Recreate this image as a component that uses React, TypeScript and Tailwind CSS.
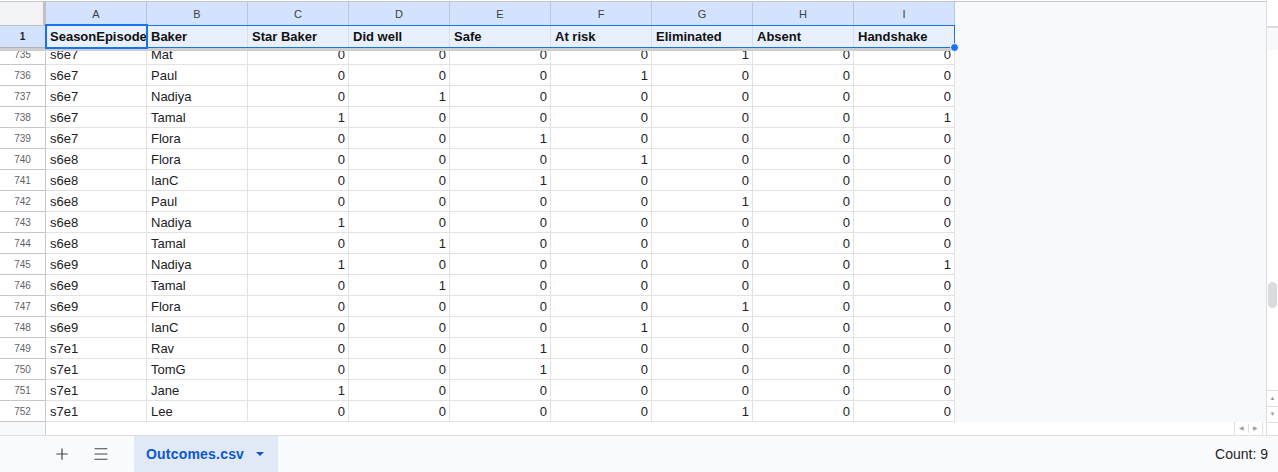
import React from "react";
import { Plus, Menu } from "lucide-react";

const letters = ["A", "B", "C", "D", "E", "F", "G", "H", "I"];
const headers = ["SeasonEpisode", "Baker", "Star Baker", "Did well", "Safe", "At risk", "Eliminated", "Absent", "Handshake"];

const rows: [number, string, string, number[]][] = [
  [735, "s6e7", "Mat", [0, 0, 0, 0, 1, 0, 0]],
  [736, "s6e7", "Paul", [0, 0, 0, 1, 0, 0, 0]],
  [737, "s6e7", "Nadiya", [0, 1, 0, 0, 0, 0, 0]],
  [738, "s6e7", "Tamal", [1, 0, 0, 0, 0, 0, 1]],
  [739, "s6e7", "Flora", [0, 0, 1, 0, 0, 0, 0]],
  [740, "s6e8", "Flora", [0, 0, 0, 1, 0, 0, 0]],
  [741, "s6e8", "IanC", [0, 0, 1, 0, 0, 0, 0]],
  [742, "s6e8", "Paul", [0, 0, 0, 0, 1, 0, 0]],
  [743, "s6e8", "Nadiya", [1, 0, 0, 0, 0, 0, 0]],
  [744, "s6e8", "Tamal", [0, 1, 0, 0, 0, 0, 0]],
  [745, "s6e9", "Nadiya", [1, 0, 0, 0, 0, 0, 1]],
  [746, "s6e9", "Tamal", [0, 1, 0, 0, 0, 0, 0]],
  [747, "s6e9", "Flora", [0, 0, 0, 0, 1, 0, 0]],
  [748, "s6e9", "IanC", [0, 0, 0, 1, 0, 0, 0]],
  [749, "s7e1", "Rav", [0, 0, 1, 0, 0, 0, 0]],
  [750, "s7e1", "TomG", [0, 0, 1, 0, 0, 0, 0]],
  [751, "s7e1", "Jane", [1, 0, 0, 0, 0, 0, 0]],
  [752, "s7e1", "Lee", [0, 0, 0, 0, 1, 0, 0]],
];

const DataRow = ({ row }: { row: [number, string, string, number[]] }) => {
  const [num, ep, baker, vals] = row;
  return (
    <div className="flex h-[21px] w-[955px] bg-white">
      <div className="flex w-[46px] shrink-0 items-center justify-center border-r border-b border-[#c7c7c7] pt-px text-[10px] text-[#5f6368]">
        {num}
      </div>
      <div className="flex w-[101px] shrink-0 items-center border-r border-b border-[#e2e2e2] pl-[4px] pt-px text-[13px] text-[#202124]">
        {ep}
      </div>
      <div className="flex w-[101px] shrink-0 items-center border-r border-b border-[#e2e2e2] pl-[4px] pt-px text-[13px] text-[#202124]">
        {baker}
      </div>
      {vals.map((v, i) => (
        <div
          key={i}
          className="flex w-[101px] shrink-0 items-center justify-end border-r border-b border-[#e2e2e2] pr-[3px] pt-px text-[13px] text-[#202124]"
        >
          {v}
        </div>
      ))}
    </div>
  );
};

export default function App() {
  return (
    <div className="flex h-[472px] w-[1278px] flex-col overflow-hidden bg-white font-['Liberation_Sans',Arial,sans-serif] text-[#1f1f1f]">
      <div className="flex h-[435px] shrink-0">
        {/* sheet */}
        <div className="flex w-[1266px] shrink-0 flex-col pt-px">
          <div className="relative flex flex-1 flex-col border-t border-[#c7c7c7] bg-[#f8f9fa]">
            {/* column letters */}
            <div className="flex h-[24px] w-[955px] shrink-0">
              <div className="w-[46px] shrink-0 border-r-[3px] border-b border-[#c0c0c0] bg-[#f1f3f4]" />
              {letters.map((l) => (
                <div
                  key={l}
                  className="flex w-[101px] shrink-0 items-center justify-center border-r border-b border-[#b9c6dc] bg-[#d3e3fd] pt-px text-[11px] text-[#3c4043]"
                >
                  {l}
                </div>
              ))}
            </div>

            {/* frozen header row */}
            <div className="flex h-[21px] w-[955px] shrink-0">
              <div className="flex w-[46px] shrink-0 items-center justify-center border-r border-[#c0c0c0] bg-[#d3e3fd] text-[10px] font-bold text-[#1f1f1f]">
                1
              </div>
              {headers.map((h) => (
                <div
                  key={h}
                  className="flex w-[101px] shrink-0 items-center overflow-hidden whitespace-nowrap border-r border-[#d6def0] bg-[#e8f0fe] pl-[4px] text-[13px] font-bold text-[#111]"
                >
                  {h}
                </div>
              ))}
            </div>

            {/* frozen divider */}
            <div className="h-[4px] w-[955px] shrink-0 border-t border-[#b5b5b5] bg-[#cfcfcf]" />

            {/* scrolled rows */}
            <div className="h-[371px] shrink-0 overflow-hidden">
              <div className="-mt-[7px]">
                {rows.map((r) => (
                  <DataRow key={r[0]} row={r} />
                ))}
              </div>
            </div>

            {/* horizontal scroll strip */}
            <div className="flex h-[13px] shrink-0 items-center bg-white">
              <div className="h-full w-[46px] shrink-0 border-r border-[#d0d0d0] bg-[#f8f9fa]" />
              <div className="flex-1" />
              <div className="flex h-full items-center">
                <div className="h-full border-l border-[#e0e0e0]" />
                <span className="flex w-[13px] justify-center text-[6px] text-[#9aa0a6]">◀</span>
                <div className="h-[9px] border-l border-[#e0e0e0]" />
                <span className="flex w-[13px] justify-center text-[6px] text-[#9aa0a6]">▶</span>
                <div className="h-full w-[4px] border-l border-[#e0e0e0]" />
              </div>
            </div>

            {/* selection overlays */}
            <div className="pointer-events-none absolute left-[46px] top-[23px] h-[23px] w-[909px] border border-[#1a73e8]" />
            <div className="pointer-events-none absolute left-[45px] top-[22px] h-[25px] w-[103px] border-2 border-[#1a73e8]" />
            <div className="pointer-events-none absolute left-[950px] top-[41px] h-[9px] w-[9px] rounded-full border border-white bg-[#1a73e8]" />
          </div>
        </div>

        {/* vertical scrollbar */}
        <div className="flex w-[12px] shrink-0 flex-col border-l border-[#dadce0] bg-white">
          <div className="h-[26px] shrink-0" />
          <div className="h-[24px] shrink-0 border-t-2 border-[#dcdcdc] bg-[#f8f9fa]" />
          <div className="h-[232px] shrink-0" />
          <div className="mx-auto h-[26px] w-[9px] shrink-0 rounded-full bg-[#dadce0]" />
          <div className="flex-1" />
          <div className="flex h-[16px] shrink-0 items-center justify-center border-t border-[#e0e0e0] text-[6px] text-[#9aa0a6]">▲</div>
          <div className="flex h-[16px] shrink-0 items-center justify-center border-t border-[#e0e0e0] text-[6px] text-[#9aa0a6]">▼</div>
          <div className="h-[13px] shrink-0 border-t border-[#e0e0e0]" />
        </div>
      </div>

      {/* bottom bar */}
      <div className="flex h-[37px] shrink-0 items-center border-t border-[#e0e0e0] bg-[#f9fbfd]">
        <Plus size={18} strokeWidth={1.6} className="ml-[53px] shrink-0 text-[#444746]" />
        <Menu size={18} strokeWidth={1.6} className="ml-[21px] shrink-0 text-[#444746]" />
        <div className="ml-[24px] flex h-full w-[144px] shrink-0 items-center bg-[#e1e9f7] pl-[12px]">
          <span className="text-[14px] font-bold tracking-[0.2px] text-[#0b57d0]">Outcomes.csv</span>
          <svg width="10" height="6" viewBox="0 0 10 6" className="ml-[11px]">
            <path d="M1 1 L9 1 L5 5 Z" fill="#0b57d0" />
          </svg>
        </div>
        <div className="flex-1" />
        <span className="pr-[10px] text-[14px] text-[#1f1f1f]">Count: 9</span>
      </div>
    </div>
  );
}
